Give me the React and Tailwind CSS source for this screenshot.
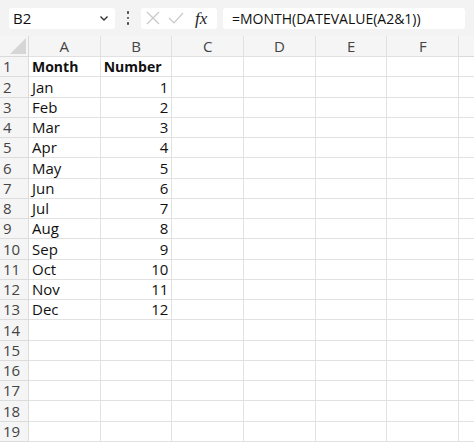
import React from "react";

const months = ["Jan", "Feb", "Mar", "Apr", "May", "Jun", "Jul", "Aug", "Sep", "Oct", "Nov", "Dec"];
const cols = ["A", "B", "C", "D", "E", "F"];

const Cell = ({ children, className = "" }) => (
  <div
    className={`w-[71.7px] shrink-0 h-full border-r border-b border-[#e1e1e1] px-[3px] flex items-center overflow-hidden whitespace-nowrap ${className}`}
  >
    {children}
  </div>
);

export default function App() {
  const rows = [];
  for (let i = 1; i <= 19; i++) {
    let a = null;
    let b = null;
    let bold = false;
    if (i === 1) {
      a = "Month";
      b = "Number";
      bold = true;
    } else if (i <= 13) {
      a = months[i - 2];
      b = i - 1;
    }
    rows.push({ i, a, b, bold });
  }

  return (
    <div
      className="w-[474px] h-[442px] overflow-hidden bg-white text-[#111] flex flex-col"
      style={{ fontFamily: '"Open Sans", "Noto Sans", sans-serif' }}
    >
      {/* formula bar */}
      <div className="h-[36px] shrink-0 bg-[#f3f3f3] flex items-center pl-[9px] pr-[9px] gap-[6px]">
        <div className="w-[106px] h-[21px] bg-white rounded-[3px] flex items-center justify-between pl-[4px] pr-[6px] text-[15px]">
          <span>B2</span>
          <svg width="10" height="10" viewBox="0 0 10 10">
            <path d="M1.5 3.5 L5 7 L8.5 3.5" fill="none" stroke="#333" strokeWidth="1.4" />
          </svg>
        </div>
        <div className="w-[14px] flex flex-col items-center gap-[3px]">
          <span className="w-[2.5px] h-[2.5px] bg-[#444] rounded-full" />
          <span className="w-[2.5px] h-[2.5px] bg-[#444] rounded-full" />
          <span className="w-[2.5px] h-[2.5px] bg-[#444] rounded-full" />
        </div>
        <div className="w-[76px] h-[21px] bg-white rounded-[3px] flex items-center pl-[5px] gap-[8px]">
          <svg width="14" height="14" viewBox="0 0 14 14">
            <path d="M1 1 L13 13 M13 1 L1 13" stroke="#c8c8c8" strokeWidth="1.2" />
          </svg>
          <svg width="16" height="14" viewBox="0 0 16 14">
            <path d="M1 7 L6 12 L15 2" fill="none" stroke="#c8c8c8" strokeWidth="1.2" />
          </svg>
          <span
            className="italic text-[17px] leading-none text-[#222] ml-[3px]"
            style={{ fontFamily: '"Liberation Serif", serif' }}
          >
            fx
          </span>
        </div>
        <div className="flex-1 h-[21px] bg-white rounded-[3px] flex items-center pl-[9px] text-[14px] whitespace-nowrap">
          =MONTH(DATEVALUE(A2&amp;1))
        </div>
      </div>

      {/* column headers */}
      <div className="h-[21px] shrink-0 flex bg-[#f5f5f5] text-[15px] text-[#444]">
        <div className="w-[29px] shrink-0 h-full border-r border-b border-[#d9d9d9] relative overflow-hidden">
          <svg className="absolute right-[2px] bottom-[2px]" width="16" height="16" viewBox="0 0 16 16">
            <path d="M16 0 L16 16 L0 16 Z" fill="#d6d6d6" />
          </svg>
        </div>
        {cols.map((c) => (
          <div
            key={c}
            className="w-[71.7px] shrink-0 h-full border-r border-b border-[#e1e1e1] flex items-center justify-center"
          >
            {c}
          </div>
        ))}
        <div className="flex-1 h-full border-b border-[#d9d9d9]" />
      </div>

      {/* grid */}
      <div className="flex flex-col text-[15px]">
        {rows.map((r) => (
          <div key={r.i} className="h-[20.25px] shrink-0 flex">
            <div className="w-[29px] shrink-0 h-full bg-[#f5f5f5] border-r border-b border-[#dcdcdc] flex items-center pl-[3px] text-[#444]">
              {r.i}
            </div>
            <Cell className={r.bold ? "font-bold text-[14px]" : ""}>{r.a}</Cell>
            <Cell className={r.bold ? "font-bold text-[14px]" : "justify-end"}>{r.b}</Cell>
            <Cell />
            <Cell />
            <Cell />
            <Cell />
            <div className="flex-1 h-full border-b border-[#e1e1e1]" />
          </div>
        ))}
      </div>
    </div>
  );
}
